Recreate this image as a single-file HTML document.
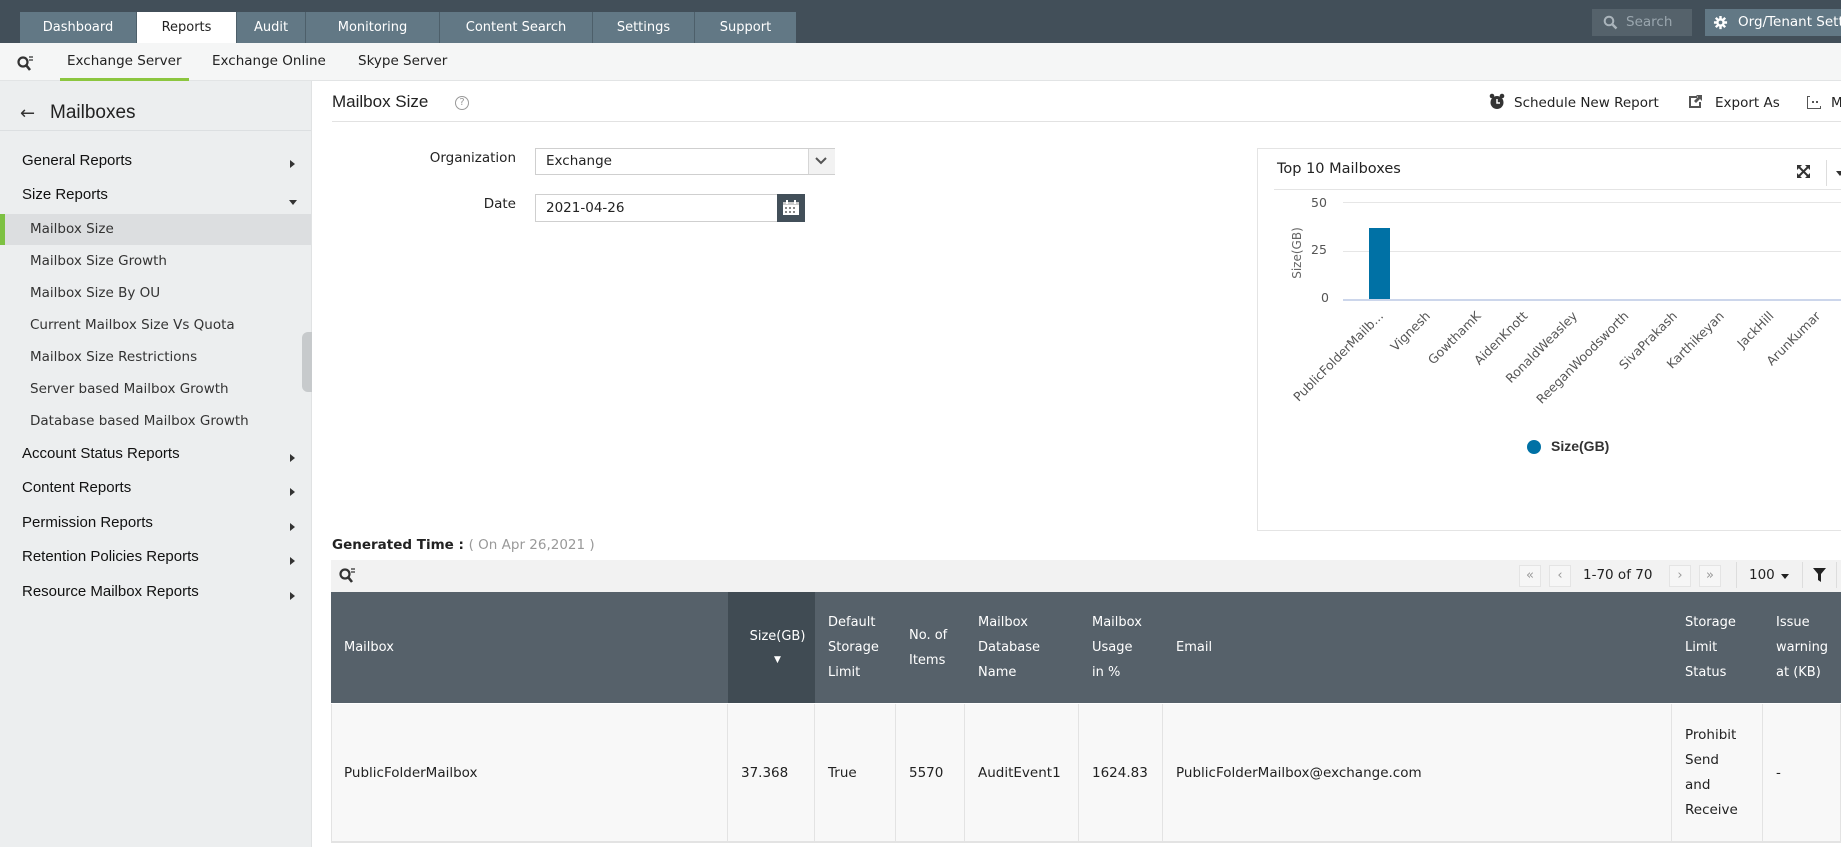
<!DOCTYPE html>
<html><head><meta charset="utf-8"><style>
*{box-sizing:border-box;margin:0;padding:0}
body{width:1841px;height:847px;overflow:hidden;background:#fff;font-family:"DejaVu Sans","Liberation Sans",sans-serif;font-size:13px;color:#222;position:relative}
.a{position:absolute}
#top{left:0;top:0;width:1841px;height:43px;background:#424f59}
.tab{position:absolute;top:12px;height:31px;background:#627885;color:#fff;font-size:13px;line-height:31px;text-align:center;border-right:1px solid #4d5f6a}
.tab.on{background:#fff;color:#222}
#sub{left:0;top:43px;width:1841px;height:38px;background:#f5f6f6;border-bottom:1px solid #e2e4e5}
.st{position:absolute;top:0;line-height:36px;font-size:13.5px;color:#222}
#side{left:0;top:81px;width:312px;height:766px;background:#eceeef;border-right:1px solid #e0e2e3}
.h{position:absolute;left:22px;font-family:"Liberation Sans",sans-serif;font-size:15px;color:#111}
.s{position:absolute;left:30px;font-size:13.5px;color:#333}
.ar{position:absolute;left:290px;width:0;height:0;border-top:4px solid transparent;border-bottom:4px solid transparent;border-left:5px solid #333}
.th{position:absolute;top:592px;height:111px;color:#fff;font-size:13px;line-height:25px;display:flex;align-items:center;padding-left:13px}
.td{position:absolute;top:704px;height:138px;font-size:13.5px;line-height:25px;display:flex;align-items:center;padding-left:13px;border-right:1px solid #e3e3e3}
.lbl{position:absolute;font-size:12.5px;color:#555;transform-origin:right center;transform:rotate(-45deg);white-space:nowrap;text-align:right}
.pb{position:absolute;top:565px;width:22px;height:22px;border:1px solid #e4e4e4;background:#f6f6f6;color:#999;font-size:13px;text-align:center;line-height:19px}
</style></head><body>
<div id="top" class="a">
 <div class="tab" style="left:20px;width:117px">Dashboard</div>
 <div class="tab on" style="left:137px;width:100px">Reports</div>
 <div class="tab" style="left:237px;width:69px">Audit</div>
 <div class="tab" style="left:306px;width:134px">Monitoring</div>
 <div class="tab" style="left:440px;width:153px">Content Search</div>
 <div class="tab" style="left:593px;width:102px">Settings</div>
 <div class="tab" style="left:695px;width:101px;border:none">Support</div>
 <div class="a" style="left:1592px;top:9px;width:100px;height:27px;background:#55626b;color:#9aa6ae;font-size:13.5px;line-height:27px;padding-left:34px">Search
  <svg class="a" style="left:11px;top:6px" width="15" height="15" viewBox="0 0 15 15"><circle cx="6" cy="6" r="4.3" fill="none" stroke="#aab4bb" stroke-width="2"/><path d="M9 9l4.5 4.5" stroke="#aab4bb" stroke-width="2.4"/></svg></div>
 <div class="a" style="left:1705px;top:9px;width:136px;height:27px;background:#627885;color:#fff;font-size:13.5px;line-height:27px;padding-left:33px;white-space:nowrap;overflow:hidden">Org/Tenant Settings
  <svg class="a" style="left:8px;top:6px" width="15" height="15" viewBox="0 0 16 16"><circle cx="8" cy="8" r="4.5" fill="#fff"/><g stroke="#fff" stroke-width="2.6"><path d="M8 1v14M1 8h14M3 3l10 10M13 3L3 13"/></g><circle cx="8" cy="8" r="2" fill="#627885"/></svg></div>
</div>
<div id="sub" class="a">
 <svg class="a" style="left:16px;top:11px" width="18" height="18" viewBox="0 0 18 18"><circle cx="7" cy="8" r="4.5" fill="none" stroke="#333" stroke-width="2.2"/><path d="M10 11l4 5" stroke="#333" stroke-width="2.6"/><path d="M13 3h4M13 6h4" stroke="#333" stroke-width="1.3"/></svg>
 <div class="st" style="left:67px">Exchange Server</div>
 <div class="a" style="left:60px;top:35px;width:129px;height:3px;background:#8cc63f"></div>
 <div class="st" style="left:212px">Exchange Online</div>
 <div class="st" style="left:358px">Skype Server</div>
</div>
<div id="side" class="a">
 <div class="a" style="left:20px;top:23px;font-size:18px;line-height:20px;color:#333">&#8592;</div>
 <div class="a" style="left:50px;top:21px;font-family:'Liberation Sans',sans-serif;font-size:19px;color:#222">Mailboxes</div>
 <div class="a" style="left:0;top:49px;width:311px;height:1px;background:#dcdfe1"></div>
 <div class="a" style="left:0;top:133px;width:311px;height:31px;background:#dcdee0"></div>
 <div class="a" style="left:0;top:133px;width:5px;height:31px;background:#7dc142"></div>
 <div class="a" style="left:302px;top:251px;width:10px;height:60px;background:#c7cacc;border-radius:6px 0 0 6px"></div>
</div>
<div class="h" style="top:152px">General Reports</div><div class="ar" style="top:160px"></div>
<div class="h" style="top:186px">Size Reports</div><div class="a" style="left:289px;top:200px;border-left:4px solid transparent;border-right:4px solid transparent;border-top:5px solid #333"></div>
<div class="s" style="top:221px">Mailbox Size</div>
<div class="s" style="top:253px">Mailbox Size Growth</div>
<div class="s" style="top:285px">Mailbox Size By OU</div>
<div class="s" style="top:317px">Current Mailbox Size Vs Quota</div>
<div class="s" style="top:349px">Mailbox Size Restrictions</div>
<div class="s" style="top:381px">Server based Mailbox Growth</div>
<div class="s" style="top:413px">Database based Mailbox Growth</div>
<div class="h" style="top:445px">Account Status Reports</div><div class="ar" style="top:454px"></div>
<div class="h" style="top:479px">Content Reports</div><div class="ar" style="top:488px"></div>
<div class="h" style="top:514px">Permission Reports</div><div class="ar" style="top:523px"></div>
<div class="h" style="top:548px">Retention Policies Reports</div><div class="ar" style="top:557px"></div>
<div class="h" style="top:583px">Resource Mailbox Reports</div><div class="ar" style="top:592px"></div>

<div class="a" style="left:332px;top:92px;font-family:'Liberation Sans',sans-serif;font-size:17px;color:#222">Mailbox Size</div>
<div class="a" style="left:455px;top:96px;width:14px;height:14px;border:1px solid #999;border-radius:50%;font-size:10px;line-height:12px;text-align:center;color:#999">?</div>
<div class="a" style="left:332px;top:121px;width:1509px;height:1px;background:#e2e2e2"></div>
<svg class="a" style="left:1489px;top:93px" width="16" height="17" viewBox="0 0 16 17"><circle cx="8" cy="9.5" r="6.5" fill="#333"/><circle cx="3" cy="3" r="2.3" fill="#333"/><circle cx="13" cy="3" r="2.3" fill="#333"/><path d="M8 6v4h3" stroke="#fff" stroke-width="1.5" fill="none"/></svg>
<div class="a" style="left:1514px;top:95px;font-size:13.5px">Schedule New Report</div>
<svg class="a" style="left:1688px;top:94px" width="15" height="15" viewBox="0 0 15 15"><path d="M1 2h8v2H3v8h8V8h2v6H1z" fill="#555"/><path d="M8 1h6v6l-2-2-4 4-2-2 4-4z" fill="#555"/></svg>
<div class="a" style="left:1715px;top:95px;font-size:13.5px">Export As</div>
<svg class="a" style="left:1806px;top:95px" width="15" height="15" viewBox="0 0 15 15"><path d="M1 1h3v1H2v11h12v-2h1v3H1z" fill="#555"/><path d="M6 6h2v2H6zM10 6h2v2h-2z" fill="#555"/></svg>
<div class="a" style="left:1831px;top:95px;font-size:13.5px">M</div>

<div class="a" style="left:429px;top:150px;font-size:13.5px;width:87px;text-align:right">Organization</div>
<div class="a" style="left:535px;top:148px;width:300px;height:27px;border:1px solid #cfcfcf;font-size:13.5px;line-height:25px;padding-left:10px">Exchange</div>
<div class="a" style="left:808px;top:149px;width:27px;height:25px;background:#f2f2f2;border-left:1px solid #d6d6d6"></div>
<svg class="a" style="left:815px;top:157px" width="12" height="8" viewBox="0 0 12 8"><path d="M1 1l5 5 5-5" stroke="#555" stroke-width="2" fill="none"/></svg>
<div class="a" style="left:429px;top:196px;font-size:13.5px;width:87px;text-align:right">Date</div>
<div class="a" style="left:535px;top:194px;width:270px;height:28px;border:1px solid #cfcfcf;font-size:13.5px;line-height:26px;padding-left:10px">2021-04-26</div>
<div class="a" style="left:777px;top:194px;width:28px;height:28px;background:#424f59"></div>
<svg class="a" style="left:782px;top:199px" width="18" height="17" viewBox="0 0 18 17"><rect x="1" y="3" width="16" height="13" fill="#fff"/><rect x="1" y="3" width="16" height="3" fill="#ccc"/><rect x="4" y="1" width="2" height="4" fill="#fff"/><rect x="12" y="1" width="2" height="4" fill="#fff"/><g fill="#888"><rect x="3" y="8" width="2" height="2"/><rect x="7" y="8" width="2" height="2"/><rect x="11" y="8" width="2" height="2"/><rect x="3" y="12" width="2" height="2"/><rect x="7" y="12" width="2" height="2"/><rect x="11" y="12" width="2" height="2"/></g></svg>

<div class="a" style="left:1257px;top:148px;width:600px;height:383px;border:1px solid #e4e4e4"></div>
<div class="a" style="left:1277px;top:161px;font-size:14.5px;color:#222">Top 10 Mailboxes</div>
<div class="a" style="left:1274px;top:189px;width:567px;height:1px;background:#e4e4e4"></div>
<svg class="a" style="left:1796px;top:164px" width="15" height="15" viewBox="0 0 15 15"><g stroke="#333" stroke-width="2" fill="none"><path d="M2 2l11 11M13 2L2 13"/></g><path d="M1 1h5L1 6zM14 1h-5l5 5zM1 14h5l-5-5zM14 14h-5l5-5z" fill="#333"/></svg>
<div class="a" style="left:1826px;top:160px;width:1px;height:26px;background:#ddd"></div>
<div class="a" style="left:1836px;top:171px;border-left:4px solid transparent;border-right:4px solid transparent;border-top:5px solid #333"></div>
<div class="a" style="left:1311px;top:195px;font-size:12.5px;color:#555">50</div>
<div class="a" style="left:1311px;top:242px;font-size:12.5px;color:#555">25</div>
<div class="a" style="left:1321px;top:290px;font-size:12.5px;color:#555">0</div>
<div class="a" style="left:1271px;top:246px;font-size:12px;color:#666;transform:rotate(-90deg);transform-origin:center">Size(GB)</div>
<div class="a" style="left:1343px;top:202px;width:498px;height:1px;background:#e6e6e6"></div>
<div class="a" style="left:1343px;top:251px;width:498px;height:1px;background:#e6e6e6"></div>
<div class="a" style="left:1343px;top:299px;width:498px;height:2px;background:#ccd6eb"></div>
<div class="a" style="left:1369px;top:228px;width:21px;height:71px;background:#0071a5"></div>
<div class="lbl" style="right:460px;top:306px">PublicFolderMailb...</div>
<div class="lbl" style="right:413px;top:306px">Vignesh</div>
<div class="lbl" style="right:363px;top:306px">GowthamK</div>
<div class="lbl" style="right:316px;top:306px">AidenKnott</div>
<div class="lbl" style="right:266px;top:306px">RonaldWeasley</div>
<div class="lbl" style="right:215px;top:306px">ReeganWoodsworth</div>
<div class="lbl" style="right:166px;top:306px">SivaPrakash</div>
<div class="lbl" style="right:119px;top:306px">Karthikeyan</div>
<div class="lbl" style="right:70px;top:306px">JackHill</div>
<div class="lbl" style="right:23px;top:306px">ArunKumar</div>
<div class="a" style="left:1527px;top:440px;width:14px;height:14px;border-radius:50%;background:#0071a5"></div>
<div class="a" style="left:1551px;top:438px;font-family:'Liberation Sans',sans-serif;font-weight:bold;font-size:14px;color:#333">Size(GB)</div>

<div class="a" style="left:332px;top:537px;font-size:13.5px;font-weight:bold;color:#222">Generated Time : <span style="font-weight:normal;color:#999">( On Apr 26,2021 )</span></div>
<div class="a" style="left:331px;top:560px;width:1510px;height:32px;background:#f2f2f2"></div>
<svg class="a" style="left:338px;top:566px" width="18" height="18" viewBox="0 0 18 18"><circle cx="7" cy="8" r="4.5" fill="none" stroke="#333" stroke-width="2.2"/><path d="M10 11l4 5" stroke="#333" stroke-width="2.6"/><path d="M13 3h4M13 6h4" stroke="#333" stroke-width="1.3"/></svg>
<div class="pb" style="left:1519px">&#171;</div>
<div class="pb" style="left:1549px">&#8249;</div>
<div class="a" style="left:1583px;top:567px;font-size:13.5px">1-70 of 70</div>
<div class="pb" style="left:1669px">&#8250;</div>
<div class="pb" style="left:1699px">&#187;</div>
<div class="a" style="left:1736px;top:562px;width:1px;height:26px;background:#ddd"></div>
<div class="a" style="left:1749px;top:567px;font-size:13.5px">100</div>
<div class="a" style="left:1781px;top:574px;border-left:4px solid transparent;border-right:4px solid transparent;border-top:5px solid #222"></div>
<div class="a" style="left:1802px;top:562px;width:1px;height:26px;background:#ddd"></div>
<svg class="a" style="left:1813px;top:568px" width="13" height="14" viewBox="0 0 13 14"><path d="M0 0h13L8 6v8L5 12V6z" fill="#222"/></svg>
<div class="a" style="left:1836px;top:562px;width:1px;height:26px;background:#ddd"></div>

<div class="a" style="left:331px;top:592px;width:1510px;height:111px;background:#56616a"></div>
<div class="th" style="left:331px">Mailbox</div>
<div class="th" style="left:728px;width:87px;background:#404b53;flex-direction:column;justify-content:center;padding-left:12px">Size(GB)<span style="font-size:9px;line-height:22px">&#9660;</span></div>
<div class="th" style="left:815px">Default<br>Storage<br>Limit</div>
<div class="th" style="left:896px">No. of<br>Items</div>
<div class="th" style="left:965px">Mailbox<br>Database<br>Name</div>
<div class="th" style="left:1079px">Mailbox<br>Usage<br>in %</div>
<div class="th" style="left:1163px">Email</div>
<div class="th" style="left:1672px">Storage<br>Limit<br>Status</div>
<div class="th" style="left:1763px">Issue<br>warning<br>at (KB)</div>

<div class="a" style="left:331px;top:704px;width:1510px;height:138px;background:#f8f8f8;border-left:1px solid #e3e3e3"></div>
<div class="td" style="left:331px;width:397px">PublicFolderMailbox</div>
<div class="td" style="left:728px;width:87px">37.368</div>
<div class="td" style="left:815px;width:81px">True</div>
<div class="td" style="left:896px;width:69px">5570</div>
<div class="td" style="left:965px;width:114px">AuditEvent1</div>
<div class="td" style="left:1079px;width:84px">1624.83</div>
<div class="td" style="left:1163px;width:509px">PublicFolderMailbox@exchange.com</div>
<div class="td" style="left:1672px;width:91px">Prohibit<br>Send<br>and<br>Receive</div>
<div class="td" style="left:1763px;width:78px">-</div>
<div class="a" style="left:331px;top:841px;width:1510px;height:2px;background:#e3e3e3"></div>
<div class="a" style="left:331px;top:843px;width:1510px;height:4px;background:#fff"></div>
</body></html>
